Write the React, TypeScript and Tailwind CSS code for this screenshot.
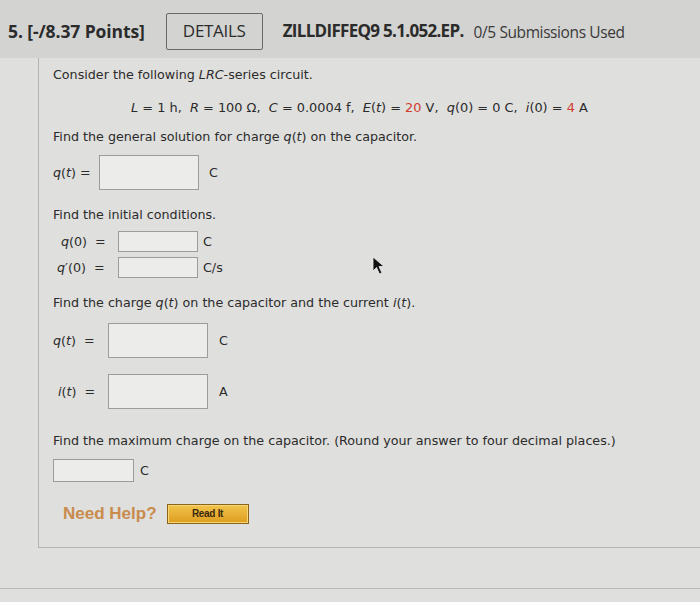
import React from "react";

const I = ({ children }: { children: React.ReactNode }) => (
  <span className="italic">{children}</span>
);

const Box = ({ w, h }: { w: string; h: string }) => (
  <div className={`${w} ${h} border border-[#9c9c9a] bg-[#ececea] shrink-0`} />
);

export default function App() {
  return (
    <div
      className="w-[700px] h-[602px] overflow-hidden bg-[#dfdfdd] text-[#2b2b2b]"
      style={{ fontFamily: "'DejaVu Sans', Verdana, sans-serif" }}
    >
      {/* Header */}
      <div
        className="h-[58px] bg-[#d3d3d1] flex items-center pl-[8px] pt-[4px]"
        style={{ fontFamily: "'Open Sans', sans-serif" }}
      >
        <span className="text-[17.5px] font-bold tracking-[-0.1px]">5. [-/8.37 Points]</span>
        <div className="ml-[21px] w-[97px] h-[37px] border-[1.5px] border-[#6a6a6a] rounded-[2px] flex items-center justify-center text-[17px] tracking-[-0.3px]">
          DETAILS
        </div>
        <span className="ml-[20px] text-[17px] font-bold tracking-[-0.7px]">ZILLDIFFEQ9 5.1.052.EP.</span>
        <span className="ml-[10px] text-[15.5px] tracking-[-0.4px] text-[#3a3a3a] pt-[4px]">0/5 Submissions Used</span>
      </div>

      {/* Panel */}
      <div className="ml-[38px] h-[490px] border-l border-b border-[#b3b3b1] pl-[14px] text-[12.7px] leading-[16px] relative">
        <div className="pt-[9px]">Consider the following <I>LRC</I>-series circuit.</div>
        <div className="mt-[17px] ml-[78px] text-[12.9px] whitespace-nowrap">
          <I>L</I> = 1 h,&nbsp; <I>R</I> = 100 Ω,&nbsp; <I>C</I> = 0.0004 f,&nbsp; <I>E</I>(<I>t</I>) ={" "}
          <span className="text-[#d23a2e]">20</span> V,&nbsp; <I>q</I>(0) = 0 C,&nbsp; <I>i</I>(0) ={" "}
          <span className="text-[#d23a2e]">4</span> A
        </div>
        <div className="mt-[13px]">
          Find the general solution for charge <I>q</I>(<I>t</I>) on the capacitor.
        </div>
        <div className="mt-[10px] flex items-center">
          <div className="w-[46px]"><I>q</I>(<I>t</I>) =</div>
          <Box w="w-[100px]" h="h-[35px]" />
          <span className="ml-[10px]">C</span>
        </div>
        <div className="mt-[17px]">Find the initial conditions.</div>
        <div className="mt-[8px] flex items-center">
          <div className="w-[65px] pl-[8px]"><I>q</I>(0) &nbsp;=</div>
          <Box w="w-[80px]" h="h-[21px]" />
          <span className="ml-[5px]">C</span>
        </div>
        <div className="mt-[5px] flex items-center">
          <div className="w-[65px] pl-[4px]"><I>q</I>′(0) &nbsp;=</div>
          <Box w="w-[80px]" h="h-[21px]" />
          <span className="ml-[5px]">C/s</span>
        </div>
        <div className="mt-[17px]">
          Find the charge <I>q</I>(<I>t</I>) on the capacitor and the current <I>i</I>(<I>t</I>).
        </div>
        <div className="mt-[12px] flex items-center">
          <div className="w-[55px]"><I>q</I>(<I>t</I>) &nbsp;=</div>
          <Box w="w-[100px]" h="h-[35px]" />
          <span className="ml-[11px]">C</span>
        </div>
        <div className="mt-[16px] flex items-center">
          <div className="w-[55px] pl-[5px]"><I>i</I>(<I>t</I>) &nbsp;=</div>
          <Box w="w-[100px]" h="h-[35px]" />
          <span className="ml-[11px]">A</span>
        </div>
        <div className="mt-[24px]">
          Find the maximum charge on the capacitor. (Round your answer to four decimal places.)
        </div>
        <div className="mt-[10px] flex items-center">
          <Box w="w-[81px]" h="h-[23px]" />
          <span className="ml-[6px]">C</span>
        </div>
        <div className="mt-[22px] flex items-center pl-[10px]">
          <span
            className="text-[17px] font-bold text-[#c98b4c] leading-[20px]"
            style={{ fontFamily: "'Liberation Sans', Arial, sans-serif" }}
          >
            Need Help?
          </span>
          <div
            className="ml-[10px] w-[82px] h-[20px] border border-[#8a6418] bg-gradient-to-b from-[#f3c44a] to-[#dc9d1c] flex items-center justify-center shadow-[inset_0_0_0_1px_#f7d878]"
            style={{ fontFamily: "'Liberation Sans', Arial, sans-serif" }}
          >
            <span className="text-[10px] font-bold text-[#3a2a10] tracking-[-0.3px]">Read It</span>
          </div>
        </div>

        {/* mouse cursor */}
        <svg
          className="absolute left-[333px] top-[198px]"
          width="16"
          height="20"
          viewBox="0 0 16 20"
        >
          <path d="M1 1 L1 15 L4.5 11.5 L7.5 18 L10 17 L7 10.5 L12 10.5 Z" fill="#111" stroke="#eee" strokeWidth="0.8" />
        </svg>
      </div>

      <div className="mt-[40px] border-t border-[#b9b9b7]" />
    </div>
  );
}
